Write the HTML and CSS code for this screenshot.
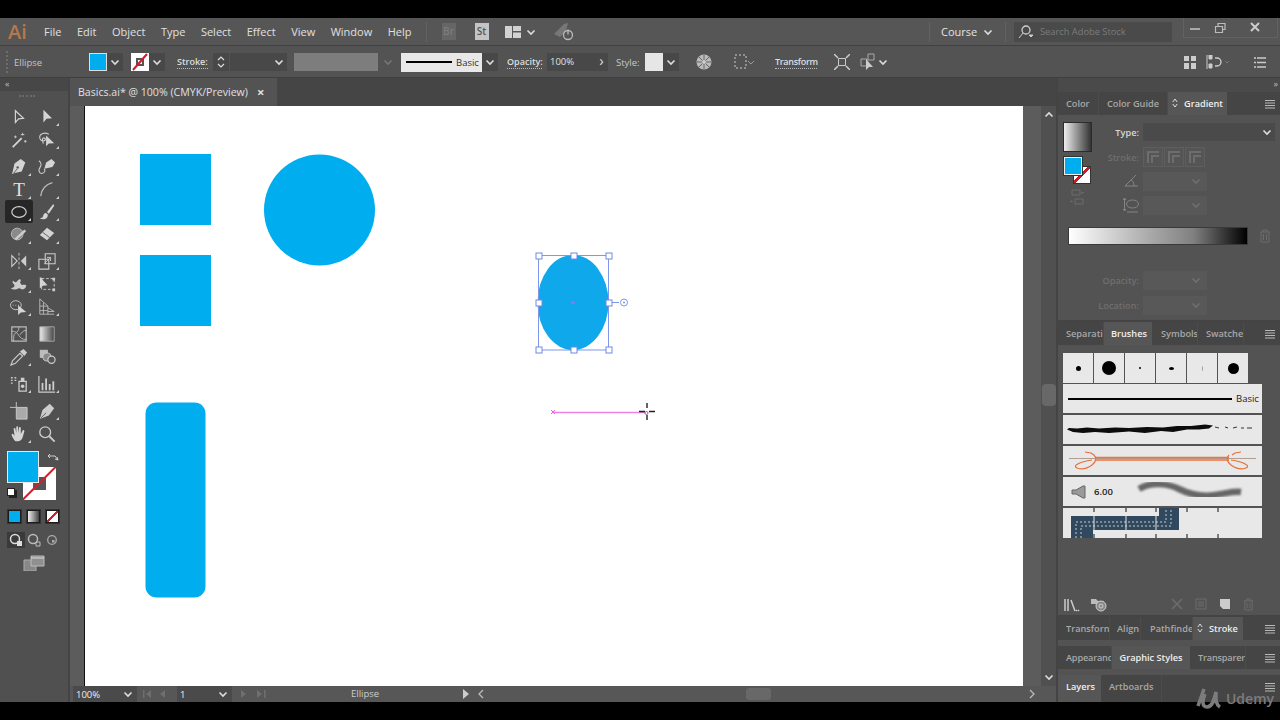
FILE: index.html
```html
<!DOCTYPE html>
<html>
<head>
    <title>Basics.ai - Illustrator</title>
    <link rel="stylesheet" href="styles.css">
</head>
<body>
    <svg class="sprite">
        <symbol id="chev" viewBox="0 0 10 10"><path d="M1.5 3.5 5 7l3.5-3.5" fill="none" stroke="currentColor" stroke-width="1.6"/></symbol>
        <symbol id="burger" viewBox="0 0 12 10"><path d="M1 1.5h10M1 4h10M1 6.500h10M1 9h10" stroke="currentColor" stroke-width="1.2"/></symbol>
        <symbol id="trash" viewBox="0 0 12 14"><path d="M1 3h10M4 3V1h4v2M2 3v10h8V3M4.500 5v6M7.500 5v6" fill="none" stroke="currentColor"/></symbol>
        <symbol id="updown" viewBox="0 0 6 10"><path d="M.8 4 3 1l2.200 3M.8 6 3 9l2.200-3" fill="none" stroke="currentColor" stroke-width=".9"/></symbol>
    </svg>

    <div class="app">
        <!-- Menu bar -->
        <div class="menubar">
            <span class="logo">Ai</span>
            <nav class="menu">
                <span>File</span><span>Edit</span><span>Object</span><span>Type</span><span>Select</span><span>Effect</span><span>View</span><span>Window</span><span>Help</span>
            </nav>
            <span class="vsep"></span>
            <span class="app-badge badge-br">Br</span>
            <span class="app-badge badge-st">St</span>
            <svg class="layout-ic" width="16" height="12" viewBox="0 0 16 12"><path d="M0 0h7v12H0zM8 0h8v5H8zM8 6.500h8V12H8z" fill="#d2d2d2"/></svg>
            <svg class="chev-small layout-chev"><use href="#chev"/></svg>
            <svg class="rocket" width="22" height="20" viewBox="0 0 22 20"><path d="M1 12 11 2l4-1-2 8-6 6z" fill="#777"/><circle cx="15" cy="13" r="4.500" fill="none" stroke="#bbb" stroke-width="1.300"/><path d="M15 7.500v5" stroke="#bbb" stroke-width="1.300"/></svg>
            <div class="menubar-right">
                <span class="vsep"></span>
                <span class="workspace">Course</span>
                <svg class="chev-small workspace-chev"><use href="#chev"/></svg>
                <span class="vsep"></span>
                <div class="stock-search">
                    <svg width="16" height="14" viewBox="0 0 16 14"><circle cx="8" cy="5" r="4" fill="none" stroke="#ccc" stroke-width="1.300"/><path d="M5 8 1 13M11 10h4l-2 2z" stroke="#ccc" fill="#ccc"/></svg>
                    <span>Search Adobe Stock</span>
                </div>
                <div class="win-btns">
                    <svg width="23" height="20" viewBox="0 0 23 20"><path d="M6 11h10" stroke="#aaa" stroke-width="2"/></svg>
                    <svg width="26" height="20" viewBox="0 0 26 20"><path d="M8.500 8.500h7v6h-7zM11 8V5.500h7v6h-2" fill="none" stroke="#bbb" stroke-width="1.200"/></svg>
                    <svg width="44" height="20" viewBox="0 0 44 20"><path d="m18 5 8 8M26 5l-8 8" stroke="#ccc" stroke-width="2"/></svg>
                </div>
            </div>
        </div>

        <!-- Control bar -->
        <div class="controlbar">
            <span class="gripper"></span>
            <span class="ctl-name">Ellipse</span>
            <span class="swatch swatch-fill"></span>
            <span class="ctl-chev"><svg class="chev-small"><use href="#chev"/></svg></span>
            <span class="swatch swatch-none">
                <svg width="18" height="18" viewBox="0 0 18 18"><path d="M6 6h6v6H6z" fill="none" stroke="#555" stroke-width="2"/><path d="M2 17 16 1" stroke="#c9202a" stroke-width="2"/></svg>
            </span>
            <span class="ctl-chev"><svg class="chev-small"><use href="#chev"/></svg></span>
            <span class="ctl-label ctl-stroke">Stroke:</span>
            <span class="stepper"><svg width="10" height="16" viewBox="0 0 10 16"><path d="M2 6l3-3 3 3M2 10l3 3 3-3" fill="none" stroke="#ddd" stroke-width="1.200"/></svg></span>
            <span class="ctl-input ctl-input-stroke"></span>
            <span class="ctl-chev"><svg class="chev-small"><use href="#chev"/></svg></span>
            <span class="dash-box"></span>
            <span class="ctl-chev ctl-chev-off"><svg class="chev-small"><use href="#chev"/></svg></span>
            <span class="brush-box"><span class="brush-line"></span><span>Basic</span></span>
            <span class="ctl-chev"><svg class="chev-small"><use href="#chev"/></svg></span>
            <span class="ctl-label ctl-opacity">Opacity:</span>
            <span class="ctl-input ctl-input-opacity">100%</span>
            <span class="ctl-arrow">&#8250;</span>
            <span class="ctl-plain ctl-style">Style:</span>
            <span class="swatch swatch-style"></span>
            <span class="ctl-chev"><svg class="chev-small"><use href="#chev"/></svg></span>
            <svg class="ctl-globe" width="16" height="16" viewBox="0 0 16 16"><circle cx="8" cy="8" r="7.500" fill="#bbb"/><path d="M8 1v14M1 8h14M3 3l10 10M13 3 3 13" stroke="#666"/><circle cx="8" cy="8" r="2" fill="#ccc"/></svg>
            <svg class="ctl-align" width="22" height="16" viewBox="0 0 22 16"><path d="M1 1h11v13H1z" fill="none" stroke="#ccc" stroke-dasharray="2 2"/><path d="m14 7 3 3 3-3" fill="none" stroke="#999"/></svg>
            <span class="ctl-label ctl-transform">Transform</span>
            <svg class="ctl-iso" width="16" height="16" viewBox="0 0 16 16"><path d="M4.500 4.500h7v7h-7z" fill="none" stroke="#ccc"/><path d="M0 0l4 4M16 0l-4 4M0 16l4-4M16 16l-4-4" stroke="#ccc" stroke-width="1.500"/></svg>
            <svg class="ctl-pick" width="18" height="18" viewBox="0 0 18 18"><path d="M1 6h6v7H1zM8 1h6v6H8z" fill="none" stroke="#aaa"/><path d="M6 6v11l3-3 4 0z" fill="#ccc"/></svg>
            <svg class="chev-small ctl-pick-chev"><use href="#chev"/></svg>
            <div class="ctl-right">
                <svg width="12" height="13" viewBox="0 0 12 13"><path d="M0 0h5v5H0zM7 0h5v5H7zM0 7h5v6H0zM7 7h5v6H7z" fill="#ccc"/></svg>
                <svg width="24" height="14" viewBox="0 0 24 14"><path d="M1 0v14M3 0h3v4H3zM3 9h3v4H3z" stroke="#ccc" fill="#ccc"/><path d="M9 3h2a4 4 0 0 1 0 8H9" fill="none" stroke="#ccc" stroke-width="1.400"/><path d="m19 6 2 2 2-2" fill="none" stroke="#777"/></svg>
                <svg class="ctl-list" width="12" height="11" viewBox="0 0 12 11"><path d="M0 1h2M3 1h9M0 5.500h2M3 5.500h9M0 10h2M3 10h9" stroke="#ccc" stroke-width="1.300"/></svg>
            </div>
        </div>

        <div class="workspace-area">
            <!-- Tools -->
            <aside class="toolbar">
                <div class="toolbar-top"><span class="collapse">&#171;</span></div>
                <span class="tool-grip"></span>
                <div class="tool-group">
                    <span class="tool"><svg viewBox="0 0 20 20"><path d="M6 3v13l3.500-4 5.500-.5z" fill="none" stroke="#d4d4d4" stroke-width="1.300"/></svg></span>
                    <span class="tool more"><svg viewBox="0 0 20 20"><path d="M6 2v14l3.500-4 6-.5z" fill="#d4d4d4"/></svg></span>
                    <span class="tool"><svg viewBox="0 0 20 20"><path d="M3 18 13 8" stroke="#d4d4d4" stroke-width="2"/><path d="M14 2v3M12 4h4M6 5v3M4.500 6.500h3M17 10v3M15.500 11.500h3" stroke="#ccc"/></svg></span>
                    <span class="tool more"><svg viewBox="0 0 20 20"><path d="M12 3.500C7 1 1 3 2 8c.7 3 4 4 6 2 1-1.500-1-3-2.500-2S5 11 6 14" fill="none" stroke="#ccc" stroke-width="1.200"/><path d="M9 5v12l3-3 6-.5z" fill="#d4d4d4"/></svg></span>
                </div>
                <div class="tool-group tool-group-tight">
                    <span class="tool more"><svg viewBox="0 0 20 20"><path d="M17 5 12 1 5 6 3 15l-1 3 2-1 9-2z" fill="#d4d4d4"/><circle cx="8.500" cy="10.500" r="1.300" fill="#555"/><path d="m4 17 4-5" stroke="#555"/></svg></span>
                    <span class="tool more"><svg viewBox="0 0 20 20"><path d="m19 5-4-4-6 4-2 7 9-2z" fill="#d4d4d4"/><path d="M1 3c3 2 3 5 1 8s0 7 3 6 3-3 2-5" fill="none" stroke="#ccc" stroke-width="1.200"/></svg></span>
                    <span class="tool more tool-t">T</span>
                    <span class="tool more"><svg viewBox="0 0 20 20"><path d="M3 18C4 10 9 5 16 3" fill="none" stroke="#bbb" stroke-width="1.500"/></svg></span>
                    <span class="tool more tool-active"><svg viewBox="0 0 20 20"><ellipse cx="10" cy="10" rx="8" ry="6" fill="none" stroke="#d4d4d4" stroke-width="1.300"/></svg></span>
                    <span class="tool more"><svg viewBox="0 0 20 20"><path d="M17 1 10 10l2 2 6-9z" fill="#d4d4d4"/><path d="M9 11c-3 0-3 3-4 5l-3 1c4 2 9 1 9-4z" fill="#d4d4d4"/></svg></span>
                    <span class="tool more"><svg viewBox="0 0 20 20"><circle cx="8" cy="10" r="6.500" fill="#8a8a8a" stroke="#bbb"/><path d="m7 17 11-10-2-2L5 15z" fill="#ccc"/></svg></span>
                    <span class="tool more"><svg viewBox="0 0 20 20"><path d="m2 11 8-8 8 6-8 8z" fill="#d4d4d4"/><path d="m5 8 8 6" stroke="#555"/></svg></span>
                </div>
                <div class="tool-group">
                    <span class="tool more"><svg viewBox="0 0 20 20"><path d="M2 4v12l6-6z" fill="none" stroke="#ccc" stroke-width="1.200"/><path d="M18 4v12l-6-6z" fill="#ccc"/><path d="M10 1v18" stroke="#ccc" stroke-dasharray="3 2"/></svg></span>
                    <span class="tool more"><svg viewBox="0 0 20 20"><path d="M1 8h11v11H1zM8 2h11v11H8z" fill="none" stroke="#ccc" stroke-width="1.200"/><path d="m7 13 7-7M10 6h4v4" fill="none" stroke="#ccc"/></svg></span>
                    <span class="tool more"><svg viewBox="0 0 20 20"><path d="M1 15c3 2 6 1 8 0s3 1 5 1 4-2 4-4-3-1-5-1l-2-3c2-1 1-4-1-3S8 8 6 8s-2-3-3-1 2 3 2 5-3 2-4 3z" fill="#ccc"/></svg></span>
                    <span class="tool"><svg viewBox="0 0 20 20"><path d="M4 4h14v12H4z" fill="none" stroke="#ccc" stroke-dasharray="3 2"/><path d="M2 2v13l3.500-3 5-.5z" fill="#d4d4d4"/><path d="M3 3h2v2H3zM16 3h3v3h-3zM16 15h3v3h-3z" fill="#ccc"/></svg></span>
                    <span class="tool more"><svg viewBox="0 0 20 20"><ellipse cx="6.500" cy="8" rx="6" ry="5" fill="none" stroke="#ccc"/><path d="M3 8h1M6 8h1M9 8h1" stroke="#ccc"/><path d="M9 8v11l3-3 6-.5z" fill="#d4d4d4"/></svg></span>
                    <span class="tool more"><svg viewBox="0 0 20 20"><path d="M2 1v17h16M2 1l9 8v9M6 5v13M2 9h9M2 14h9M11 11l7 4M11 15h7" fill="none" stroke="#bbb"/></svg></span>
                </div>
                <div class="tool-group">
                    <span class="tool"><svg viewBox="0 0 20 20"><path d="M2 2h16v16H2z" fill="none" stroke="#bbb" stroke-width="1.300"/><path d="M2 7c5 0 6 2 8 5s4 4 8 4M10 2c0 4-2 6-4 7s-2 5-2 9M18 6c-4 0-5 3-7 5" fill="none" stroke="#bbb"/></svg></span>
                    <span class="tool"><svg viewBox="0 0 20 20"><defs><linearGradient id="toolgrad"><stop offset="0" stop-color="#eee"/><stop offset="1" stop-color="#444"/></linearGradient></defs><path d="M2 2h16v16H2z" fill="url(#toolgrad)" stroke="#aaa"/></svg></span>
                    <span class="tool more"><svg viewBox="0 0 20 20"><path d="m1 19 2-5 8-8 3 3-8 8z" fill="none" stroke="#ccc" stroke-width="1.300"/><path d="m11 4 4-3 4 4-3 4z" fill="#ccc"/></svg></span>
                    <span class="tool"><svg viewBox="0 0 20 20"><path d="M2 2h9v9H2z" fill="#bbb"/><circle cx="10" cy="10" r="4.500" fill="#888" stroke="#ccc"/><circle cx="15" cy="13" r="4" fill="#555" stroke="#ccc" stroke-width="1.300"/></svg></span>
                </div>
                <div class="tool-group">
                    <span class="tool more"><svg viewBox="0 0 20 20"><path d="M1 3h2M5 3h2M1 6h2M5 6h2M1 9h2" stroke="#ccc" stroke-width="1.500"/><path d="M10 7h8v11h-8z" fill="none" stroke="#ccc" stroke-width="1.400"/><path d="M12 3h4v4h-4z" fill="#ccc"/><circle cx="14" cy="12.500" r="2" fill="#ccc"/></svg></span>
                    <span class="tool more"><svg viewBox="0 0 20 20"><path d="M1 1v18h18" fill="none" stroke="#ccc" stroke-width="1.300"/><path d="M5 17V9M9 17V4M13 17v-7M17 17V7" stroke="#ccc" stroke-width="2"/></svg></span>
                </div>
                <div class="tool-group">
                    <span class="tool"><svg viewBox="0 0 20 20"><path d="M7 6h12v13H7z" fill="#aaa" stroke="#ccc"/><path d="M0 6h7M7 0v6" stroke="#ccc"/></svg></span>
                    <span class="tool more"><svg viewBox="0 0 20 20"><path d="M2 19 5 9l8-7 5 5-6 8z" fill="#ccc"/><path d="m3 18 6-6" stroke="#555"/></svg></span>
                    <span class="tool more"><svg viewBox="0 0 20 20"><path d="M6 18c-2-2-5-7-4-8s3 2 3 2L4 4c0-1 2-1 2 0l1 5V2c0-1 2-1 2 0v7l1-6c0-1 2-1 2 0v7l2-4c1-1 2 0 2 1l-2 7c-1 3-3 4-5 4z" fill="#d4d4d4"/></svg></span>
                    <span class="tool"><svg viewBox="0 0 20 20"><circle cx="8" cy="8" r="6" fill="none" stroke="#ccc" stroke-width="1.500"/><path d="m12.500 12.500 6 6" stroke="#ccc" stroke-width="2"/></svg></span>
                </div>

                <!-- Fill and stroke -->
                <div class="fill-stroke">
                    <span class="fs-stroke"><span class="fs-hole"></span><span class="fs-slash"></span></span>
                    <span class="fs-fill"></span>
                    <svg class="fs-swap" width="12" height="12" viewBox="0 0 12 12"><path d="M1 4h7l3 4M1 4l2-2M1 4l2 2M11 8l-1-3M11 8 8 7" fill="none" stroke="#ccc"/></svg>
                    <span class="fs-default"></span>
                </div>
                <div class="mode-row">
                    <span class="mode mode-color"></span>
                    <span class="mode mode-grad"></span>
                    <span class="mode mode-none"></span>
                </div>
                <div class="draw-row">
                    <span class="draw draw-on"><svg width="14" height="14" viewBox="0 0 14 14"><circle cx="6" cy="6" r="4.500" fill="none" stroke="#ddd" stroke-width="1.500"/><path d="M8 8h5v5H8z" fill="#ddd"/></svg></span>
                    <span class="draw"><svg width="14" height="14" viewBox="0 0 14 14"><circle cx="6" cy="6" r="4.500" fill="none" stroke="#bbb" stroke-width="1.500"/><path d="M9 9h4v4H9z" fill="none" stroke="#bbb"/></svg></span>
                    <span class="draw"><svg width="12" height="12" viewBox="0 0 14 14"><circle cx="7" cy="7" r="5" fill="none" stroke="#aaa" stroke-width="1.500"/><path d="M7 7h3v3H7z" fill="#aaa"/></svg></span>
                </div>
                <div class="screen-mode">
                    <svg width="22" height="16" viewBox="0 0 22 16"><path d="M1 5h12v11H1z" fill="#888" stroke="#aaa"/><path d="M8 1h13v10H8z" fill="#8f8f8f" stroke="#bbb"/><path d="M8 3h13" stroke="#ddd"/></svg>
                </div>
            </aside>

            <!-- Document -->
            <main class="document">
                <div class="tabbar">
                    <div class="doc-tab">
                        <span>Basics.ai* @ 100% (CMYK/Preview)</span>
                        <span class="tab-close">&#215;</span>
                    </div>
                </div>
                <div class="doc-body">
                    <div class="pasteboard">
                        <div class="artboard">
                            <svg class="drawing" width="938" height="580" viewBox="85 106 938 580">
                                <rect x="140" y="154" width="71" height="71" fill="#00aeef"/>
                                <rect x="140" y="255" width="71" height="71" fill="#00aeef"/>
                                <circle cx="319.500" cy="210" r="55.500" fill="#00aeef"/>
                                <rect x="145.500" y="402.500" width="60" height="195" rx="11" fill="#00aeef"/>
                                <ellipse cx="573" cy="302.500" rx="35.500" ry="47.500" fill="#0fa8ea"/>
                                <g fill="none" stroke="#7d97ea">
                                    <rect x="538.500" y="255.500" width="70" height="94.500"/>
                                    <path d="M609 302.500h10"/>
                                    <circle cx="624" cy="302.500" r="3.500"/>
                                </g>
                                <circle cx="624" cy="302.500" r="1" fill="#7d97ea"/>
                                <g fill="#fff" stroke="#6f8ae6">
                                    <rect x="536" y="253" width="6" height="6"/>
                                    <rect x="571" y="253" width="6" height="6"/>
                                    <rect x="606" y="253" width="6" height="6"/>
                                    <rect x="536" y="300" width="6" height="6"/>
                                    <rect x="606" y="300" width="6" height="6"/>
                                    <rect x="536" y="347" width="6" height="6"/>
                                    <rect x="571" y="347" width="6" height="6"/>
                                    <rect x="606" y="347" width="6" height="6"/>
                                </g>
                                <circle cx="573" cy="302.500" r="1.800" fill="#8f78ea"/>
                                <path d="M553 412.500h92" stroke="#ee82e6" stroke-width="1.400"/>
                                <path d="m551 410 4 4m0-4-4 4" stroke="#ee60e0"/>
                                <path d="M647 403v5M647 415v5M639 411.500h6M649 411.500h6" stroke="#222" stroke-width="1.400"/>
                                <circle cx="646.500" cy="413" r="1.500" fill="none" stroke="#a55ca0"/>
                            </svg>
                        </div>
                    </div>
                    <div class="v-scroll">
                        <svg class="chev-small chev-up"><use href="#chev"/></svg>
                        <span class="v-thumb"></span>
                        <svg class="chev-small"><use href="#chev"/></svg>
                    </div>
                </div>
                <div class="statusbar">
                    <span class="st-input st-zoom">100%</span>
                    <span class="st-chev"><svg class="chev-small"><use href="#chev"/></svg></span>
                    <span class="st-nav st-nav-left">
                        <svg width="34" height="10" viewBox="0 0 34 10"><path d="M1 1v8h1.500V1zM9 1 4 5l5 4zM23 1l-5 4 5 4z" fill="#6f6f6f"/></svg>
                    </span>
                    <span class="st-input st-page">1</span>
                    <span class="st-chev"><svg class="chev-small"><use href="#chev"/></svg></span>
                    <span class="st-nav st-nav-right">
                        <svg width="34" height="10" viewBox="0 0 34 10"><path d="m1 1 5 4-5 4zM17 1l5 4-5 4zM24 1v8h1.500V1z" fill="#6f6f6f"/></svg>
                    </span>
                    <span class="st-tool">Ellipse</span>
                    <svg class="st-play" width="8" height="10" viewBox="0 0 8 10"><path d="m1 0 6 5-6 5z" fill="#ccc"/></svg>
                    <svg class="st-back" width="8" height="10" viewBox="0 0 8 10"><path d="M6 1 2 5l4 4" fill="none" stroke="#bbb" stroke-width="1.300"/></svg>
                    <span class="h-thumb"></span>
                    <svg class="st-end" width="8" height="10" viewBox="0 0 8 10"><path d="m2 1 4 4-4 4" fill="none" stroke="#bbb" stroke-width="1.300"/></svg>
                </div>
            </main>

            <!-- Panels -->
            <aside class="panels">
                <div class="panels-top"><span class="collapse">&#187;</span></div>

                <div class="tabs">
                    <span class="tab tab-color">Color</span>
                    <span class="tab tab-guide">Color Guide</span>
                    <span class="tab tab-gradient tab-on"><svg class="tab-arrow"><use href="#updown"/></svg>Gradient</span>
                    <svg class="burger"><use href="#burger"/></svg>
                </div>
                <section class="gradient-panel">
                    <div class="grad-top">
                        <div class="grad-left">
                            <span class="grad-preview"></span>
                            <div class="mini-fs"><span class="mini-stroke"></span><span class="mini-fill"></span></div>
                            <svg class="mini-ic" width="16" height="16" viewBox="0 0 16 16"><path d="M3 1h8v5H3zM6 10h8v5H6z" fill="none" stroke="#6d6d6d"/><path d="M12 3h3l-1.500 2zM1 13h3l-1.500-2z" fill="#6d6d6d"/></svg>
                        </div>
                        <div class="grad-fields">
                            <div class="grad-row grad-row-type">
                                <span class="grad-label grad-label-on">Type:</span>
                                <span class="grad-select"><svg class="chev-small"><use href="#chev"/></svg></span>
                            </div>
                            <div class="grad-row grad-row-stroke">
                                <span class="grad-label">Stroke:</span>
                                <span class="grad-buttons">
                                    <span class="grad-btn"><svg width="14" height="14" viewBox="0 0 14 14"><path d="M2 13V2h11M6 13V6h7" fill="none" stroke="#6d6d6d" stroke-width="2"/></svg></span>
                                    <span class="grad-btn"><svg width="14" height="14" viewBox="0 0 14 14"><path d="M2 13V2h11M6 13V6h7" fill="none" stroke="#6d6d6d" stroke-width="2"/></svg></span>
                                    <span class="grad-btn"><svg width="14" height="14" viewBox="0 0 14 14"><path d="M2 13V2h11M6 13V6h7" fill="none" stroke="#6d6d6d" stroke-width="2"/></svg></span>
                                </span>
                            </div>
                            <div class="grad-row">
                                <svg class="grad-label-ic" width="16" height="14" viewBox="0 0 16 14"><path d="M13 1 2 12h13M8 6c2 1 3 3 3 6" fill="none" stroke="#858585"/></svg>
                                <span class="grad-field"><svg class="chev-small"><use href="#chev"/></svg></span>
                            </div>
                            <div class="grad-row">
                                <svg class="grad-label-ic" width="16" height="16" viewBox="0 0 16 16"><ellipse cx="9.500" cy="7" rx="6" ry="4" fill="none" stroke="#858585"/><path d="M1.500 1v13M0 3l1.500-2L3 3M0 12l1.500 2L3 12M4 15h11" fill="none" stroke="#858585"/></svg>
                                <span class="grad-field"><svg class="chev-small"><use href="#chev"/></svg></span>
                            </div>
                        </div>
                    </div>
                    <div class="grad-bar-row">
                        <span class="grad-bar"></span>
                        <svg class="grad-trash"><use href="#trash"/></svg>
                    </div>
                    <div class="grad-row grad-row-low">
                        <span class="grad-label">Opacity:</span>
                        <span class="grad-field"><svg class="chev-small"><use href="#chev"/></svg></span>
                    </div>
                    <div class="grad-row">
                        <span class="grad-label">Location:</span>
                        <span class="grad-field"><svg class="chev-small"><use href="#chev"/></svg></span>
                    </div>
                </section>

                <div class="tabs tabs-brushes">
                    <span class="tab tab-sep">Separati</span>
                    <span class="tab tab-brush tab-on">Brushes</span>
                    <span class="tab tab-sym">Symbols</span>
                    <span class="tab tab-swatch">Swatche</span>
                    <svg class="burger"><use href="#burger"/></svg>
                </div>
                <section class="brushes-panel">
                    <div class="tips">
                        <span class="tip"><i class="dot dot-5"></i></span>
                        <span class="tip"><i class="dot dot-14"></i></span>
                        <span class="tip"><i class="dot dot-2"></i></span>
                        <span class="tip"><i class="dot dot-oval"></i></span>
                        <span class="tip"><i class="dot dot-thin"></i></span>
                        <span class="tip"><i class="dot dot-11"></i></span>
                    </div>
                    <div class="brush-row brush-basic"><span class="basic-line"></span><span>Basic</span></div>
                    <div class="brush-row">
                        <svg width="199" height="29" viewBox="0 0 199 29"><path d="M6 13l8 .5 10-1 12 1 16-1 14 .5 18-1 16 .5 14-1.500 14 0 14-1.500 8 1-4 3-10 1-12 0-14 2.500-12-1-16 2-16-1.500-20 1.500-14-1-12 1-10-1-6-2.500z" fill="#0c0c0c"/><path d="M152 12l4 1M162 12l3 1M170 13l4-1M178 13h3M184 13h5" stroke="#333"/></svg>
                    </div>
                    <div class="brush-row">
                        <svg width="199" height="29" viewBox="0 0 199 29"><path d="M6 12.500h187" stroke="#a08a7c" stroke-width=".8"/><path d="M32 11.500h134M32 14h134" stroke="#ec7540" stroke-width="1.300"/><path d="M31 9c3 3 2 7-2 10s-10 5-15 3 2-6 15-8M22 6l6 1 3 2M166 9c-3 3-2 7 2 10s10 5 15 3-2-6-15-8M178 6l-6 1-3 2" fill="none" stroke="#e8703c" stroke-width="1.200"/></svg>
                    </div>
                    <div class="brush-row brush-bristle">
                        <svg width="16" height="14" viewBox="0 0 16 14"><path d="M1 5h4l7-4h2v12h-2L5 9H1z" fill="#9a9a9a" stroke="#666"/></svg>
                        <span class="bristle-size">6.00</span>
                        <svg class="bristle" width="110" height="26" viewBox="0 0 110 26"><defs><filter id="soft"><feGaussianBlur stdDeviation="1.200"/></filter></defs><path d="M4 10c12-7 28-6 40 0s22 8 36 6 18-4 26-3" fill="none" stroke="#666" stroke-width="6.500" filter="url(#soft)"/></svg>
                    </div>
                    <div class="brush-row brush-pattern">
                        <svg width="199" height="30" viewBox="0 0 199 30">
                            <path d="M8 30V8h88V0h20v22H30v8z" fill="#30495f"/>
                            <path d="M13 30V14h90V0M18 30V18h90V0" fill="none" stroke="#c6ccd0" stroke-dasharray="2 2"/>
                            <path d="M31 0v4M63 0v4M93 0v4M124 0v4M155 0v4M31 26v4M63 26v4M93 26v4M124 26v4M155 26v4" stroke="#111"/>
                            <path d="M31 8v18M63 8v18M93 8v18" stroke="#e4e4e4"/>
                        </svg>
                    </div>
                    <div class="brush-footer">
                        <svg width="18" height="14" viewBox="0 0 18 14"><path d="M1 1v12M4 1v12M7 2l4 11M12 12l1 1M14 12l1 1" stroke="#ccc" stroke-width="1.500"/></svg>
                        <svg width="18" height="14" viewBox="0 0 18 14"><path d="M1 1h5l2 2h6v3H1z" fill="#bbb"/><circle cx="11" cy="8" r="5" fill="#888" stroke="#ccc"/><circle cx="11" cy="8" r="2" fill="none" stroke="#ccc"/></svg>
                        <span class="footer-right">
                            <svg width="12" height="12" viewBox="0 0 12 12"><path d="m1 1 10 10M11 1 1 11" stroke="#6d6d6d" stroke-width="1.500"/></svg>
                            <svg width="12" height="12" viewBox="0 0 12 12"><path d="M1 1h10v10H1zM3 4h6M3 6h6M3 8h6" fill="none" stroke="#6d6d6d"/></svg>
                            <svg width="12" height="12" viewBox="0 0 12 12"><path d="M1 1h10v10H4L1 8z" fill="#ccc"/></svg>
                            <svg class="footer-trash"><use href="#trash"/></svg>
                        </span>
                    </div>
                </section>

                <div class="tabs tabs-stroke">
                    <span class="tab tab-trans">Transforn</span>
                    <span class="tab tab-align">Align</span>
                    <span class="tab tab-path">Pathfinde</span>
                    <span class="tab tab-stroke tab-on"><svg class="tab-arrow"><use href="#updown"/></svg>Stroke</span>
                    <svg class="burger"><use href="#burger"/></svg>
                </div>
                <div class="tabs tabs-styles">
                    <span class="tab tab-appear">Appearanc</span>
                    <span class="tab tab-styles tab-on">Graphic Styles</span>
                    <span class="tab tab-transp">Transparer</span>
                    <svg class="burger"><use href="#burger"/></svg>
                </div>
                <div class="tabs tabs-layers">
                    <span class="tab tab-layers tab-on">Layers</span>
                    <span class="tab tab-boards">Artboards</span>
                    <svg class="burger"><use href="#burger"/></svg>
                </div>

                <div class="watermark">
                    <svg width="28" height="24" viewBox="0 0 28 24"><path d="M3 20 9 3M10 8c-3 7-3 13 2 13s7-6 9-15c0 6-1 12 4 15" fill="none" stroke="currentColor" stroke-width="3.500"/></svg>
                    <span>Udemy</span>
                </div>
            </aside>
        </div>
    </div>
</body>
</html>
```

FILE: styles.css
```css
* {
    box-sizing: border-box;
}
html, body {
    height: 720px;
}
body {
    margin: 0;
    background: #000;
    font-family: 'Open Sans', sans-serif;
    font-size: 10px;
    color: #ddd;
}
.sprite {
    display: none;
}
svg {
    display: block;
    flex: none;
}
.chev-small {
    width: 10px;
    height: 10px;
    color: #ddd;
}
.app {
    position: relative;
    top: 18px;
    height: 684px;
    width: 1280px;
    display: flex;
    flex-direction: column;
    background: #535353;
}

/* Menu bar */
.menubar {
    height: 28px;
    background: #565656;
    border-bottom: 1px solid #414141;
    display: flex;
    align-items: center;
    flex: none;
}
.logo {
    margin-left: 8px;
    width: 36px;
    font-size: 20px;
    line-height: 20px;
    color: #b5784c;
    font-weight: 600;
}
.menu {
    display: flex;
    gap: 15.500px;
    font-size: 11px;
    color: #e0e0e0;
}
.vsep {
    width: 1px;
    height: 20px;
    background: #626262;
}
.menubar > .vsep {
    margin-left: 14px;
}
.app-badge {
    width: 14px;
    height: 17px;
    font-size: 10px;
    line-height: 17px;
    text-align: center;
    font-weight: 600;
}
.badge-br {
    margin-left: 15px;
    background: #666;
    color: #7d7d7d;
}
.badge-st {
    margin-left: 19px;
    background: #c4c4c4;
    color: #555;
}
.layout-ic {
    margin-left: 16px;
}
.layout-chev {
    margin-left: 5px;
}
.rocket {
    margin-left: 17px;
}
.menubar-right {
    margin-left: auto;
    display: flex;
    align-items: center;
}
.workspace {
    margin-left: 11px;
    width: 34px;
    font-size: 11px;
    white-space: nowrap;
    color: #e4e4e4;
}
.workspace-chev {
    margin-left: 8px;
    margin-right: 12px;
}
.stock-search {
    margin-left: 8px;
    width: 158px;
    height: 20px;
    background: #4a4a4a;
    display: flex;
    align-items: center;
    gap: 6px;
    padding-left: 4px;
    color: #7c7c7c;
    font-size: 9.300px;
}
.win-btns {
    margin-left: 11px;
    margin-right: 2px;
    display: flex;
    align-items: center;
    border: 1px solid #626262;
    border-top: none;
    height: 20px;
    margin-top: -8px;
    padding-top: 1px;
}

/* Control bar */
.controlbar {
    height: 32px;
    padding-top: 1px;
    background: #535353;
    border-bottom: 1px solid #3f3f3f;
    display: flex;
    align-items: center;
    flex: none;
}
.gripper {
    width: 2px;
    height: 22px;
    margin-left: 6px;
    border-left: 2px dotted #6d6d6d;
}
.ctl-name {
    margin-left: 6px;
    width: 75px;
    color: #c4c4c4;
    font-size: 9.500px;
}
.swatch {
    display: block;
    height: 18px;
    flex: none;
}
.swatch-fill {
    width: 18px;
    background: #00aeef;
    border: 1px solid #ddd;
}
.swatch-none {
    width: 18px;
    margin-left: 8px;
    background: #fff;
}
.swatch-style {
    width: 18px;
    margin-left: 5px;
    background: #e6e6e6;
}
.ctl-chev {
    width: 16px;
    height: 18px;
    background: #484848;
    display: flex;
    align-items: center;
    justify-content: center;
    flex: none;
}
.ctl-chev-off {
    background: none;
    margin-left: 2px;
    opacity: 0.25;
}
.ctl-label {
    color: #dedede;
    font-size: 9px;
    font-weight: 600;
    border-bottom: 1px dotted #bbb;
    line-height: 12px;
    white-space: nowrap;
}
.ctl-stroke {
    margin-left: 12px;
    width: 31px;
}
.stepper {
    margin-left: 5px;
    width: 16px;
    height: 18px;
    background: #484848;
    display: flex;
    align-items: center;
    justify-content: center;
}
.ctl-input {
    height: 18px;
    background: #484848;
    color: #e0e0e0;
    line-height: 18px;
    font-size: 9.500px;
    flex: none;
}
.ctl-input-stroke {
    margin-left: 1px;
    width: 41px;
}
.dash-box {
    margin-left: 7px;
    width: 84px;
    height: 18px;
    background: #7d7d7d;
}
.brush-box {
    margin-left: 5px;
    width: 81px;
    height: 19px;
    background: #e8e8e8;
    color: #333;
    font-size: 9.500px;
    display: flex;
    align-items: center;
    gap: 4px;
    padding-left: 5px;
}
.brush-line {
    width: 46px;
    height: 2px;
    background: #000;
}
.ctl-opacity {
    margin-left: 9px;
    width: 35px;
}
.ctl-input-opacity {
    margin-left: 5px;
    width: 48px;
    padding-left: 3px;
}
.ctl-arrow {
    width: 13px;
    height: 18px;
    background: #484848;
    font-size: 15px;
    line-height: 15px;
    text-align: center;
}
.ctl-plain {
    color: #c8c8c8;
    font-size: 9.500px;
}
.ctl-style {
    margin-left: 8px;
    width: 24px;
}
.ctl-globe {
    margin-left: 17px;
}
.ctl-align {
    margin-left: 22px;
}
.ctl-transform {
    margin-left: 19px;
    width: 42px;
    letter-spacing: -0.3px;
}
.ctl-iso {
    margin-left: 17px;
}
.ctl-pick {
    margin-left: 10px;
}
.ctl-pick-chev {
    margin-left: 0;
}
.ctl-right {
    margin-left: auto;
    margin-right: 14px;
    display: flex;
    align-items: center;
    gap: 10px;
}
.ctl-list {
    margin-left: 14px;
}

/* Layout below the bars */
.workspace-area {
    flex: 1;
    min-height: 0;
    display: flex;
}

/* Tools */
.toolbar {
    width: 70px;
    flex: none;
    background: #505050;
    border-right: 2px solid #444;
    display: flex;
    flex-direction: column;
}
.toolbar-top {
    height: 13px;
    background: #474747;
    padding-left: 5px;
}
.collapse {
    display: block;
    font-size: 9px;
    line-height: 11px;
    color: #bbb;
}
.tool-grip {
    height: 3px;
    width: 16px;
    margin: 4px 0 4px 19px;
    border-top: 2px dotted #6a6a6a;
}
.tool-group {
    display: grid;
    grid-template-columns: 28px 28px;
    grid-auto-rows: 23px;
    padding-left: 5px;
    margin-top: 3px;
    margin-bottom: 1px;
}
.tool-group-tight {
    grid-auto-rows: 22.500px;
}
.tool {
    position: relative;
    width: 28px;
    height: 23px;
    display: flex;
    align-items: center;
    justify-content: center;
}
.tool svg {
    width: 18px;
    height: 18px;
}
.tool-active {
    background: #262626;
    border-radius: 2px;
}
.tool-t {
    font-family: 'Liberation Serif', serif;
    font-size: 19px;
    line-height: 23px;
    color: #e0e0e0;
}
.more::after {
    content: "";
    position: absolute;
    right: 2px;
    bottom: 2px;
    border-left: 3px solid transparent;
    border-bottom: 3px solid #ccc;
}
.fill-stroke {
    position: relative;
    height: 50px;
    margin-top: 5px;
}
.fs-fill {
    position: absolute;
    left: 7px;
    top: 0;
    width: 32px;
    height: 32px;
    background: #00aeef;
    border: 1px solid #e8e8e8;
}
.fs-stroke {
    position: absolute;
    left: 23px;
    top: 16px;
    width: 33px;
    height: 33px;
    background: #fff;
    overflow: hidden;
}
.fs-hole {
    position: absolute;
    left: 10px;
    top: 10px;
    width: 13px;
    height: 13px;
    background: #555;
}
.fs-slash {
    position: absolute;
    left: -7px;
    top: 15px;
    width: 47px;
    height: 2px;
    background: #d2202c;
    transform: rotate(-45deg);
}
.fs-swap {
    position: absolute;
    left: 47px;
    top: 1px;
}
.fs-default {
    position: absolute;
    left: 7px;
    top: 37px;
    width: 8px;
    height: 8px;
    background: #fff;
    border: 1px solid #222;
    box-shadow: 2px 2px 0 #222;
}
.mode-row {
    display: flex;
    gap: 6px;
    margin: 9px 0 0 8px;
}
.mode {
    width: 13px;
    height: 13px;
    border: 1px solid #1c1c1c;
    outline: 1px solid #333;
}
.mode-color {
    background: #00aeef;
}
.mode-grad {
    background: linear-gradient(90deg, #eee, #444);
}
.mode-none {
    background: linear-gradient(135deg, #fff 42%, #d2202c 42%, #d2202c 58%, #fff 58%);
}
.draw-row {
    display: flex;
    margin: 9px 0 0 7px;
    height: 16px;
}
.draw {
    width: 18px;
    height: 16px;
    display: flex;
    align-items: center;
    justify-content: center;
}
.draw-on {
    background: #3a3a3a;
}
.screen-mode {
    margin: 7px 0 0 23px;
}

/* Document */
.document {
    width: 986px;
    flex: none;
    display: flex;
    flex-direction: column;
}
.tabbar {
    height: 28px;
    background: #454545;
    flex: none;
}
.doc-tab {
    width: 207px;
    height: 28px;
    background: #535353;
    display: flex;
    align-items: center;
    gap: 9px;
    padding-left: 8px;
    font-size: 10.600px;
    color: #e0e0e0;
}
.tab-close {
    font-size: 13px;
    font-weight: 700;
    line-height: 13px;
}
.doc-body {
    flex: 1;
    min-height: 0;
    display: flex;
}
.pasteboard {
    flex: 1;
    background: #5c5c5c;
    padding: 0 18px 0 14px;
}
.artboard {
    height: 100%;
    background: #fff;
    border-left: 1px solid #111;
    overflow: hidden;
}
.v-scroll {
    width: 16px;
    flex: none;
    background: #505050;
    display: flex;
    flex-direction: column;
    align-items: center;
    padding: 4px 0;
}
.chev-up {
    transform: rotate(180deg);
    margin-bottom: 264px;
}
.v-thumb {
    width: 14px;
    height: 22px;
    border-radius: 4px;
    background: #686868;
    margin-bottom: 266px;
}
.statusbar {
    height: 16px;
    background: #575757;
    display: flex;
    align-items: center;
    flex: none;
    font-size: 9.500px;
}
.st-input {
    height: 16px;
    background: #4a4a4a;
    line-height: 18px;
    padding-left: 3px;
    color: #eee;
}
.st-zoom {
    margin-left: 3px;
    width: 46px;
}
.st-page {
    width: 37px;
}
.st-chev {
    width: 18px;
    height: 16px;
    background: #4a4a4a;
    display: flex;
    align-items: center;
    justify-content: center;
}
.st-nav-left {
    margin-left: 5px;
    width: 35px;
}
.st-nav-right {
    margin-left: 8px;
    width: 34px;
}
.st-tool {
    margin-left: 77px;
    width: 111px;
    line-height: 18px;
    color: #ccc;
}
.st-play {
    margin-left: 0;
}
.st-back {
    margin-left: 7px;
}
.h-thumb {
    width: 25px;
    height: 12px;
    margin-left: 261px;
    border-radius: 3px;
    background: #686868;
}
.st-end {
    margin-left: auto;
    margin-right: 20px;
}

/* Panels */
.panels {
    position: relative;
    width: 224px;
    flex: none;
    background: #535353;
    border-left: 2px solid #444;
    display: flex;
    flex-direction: column;
}
.panels-top {
    height: 14px;
    background: #4a4a4a;
    display: flex;
    justify-content: flex-end;
    padding-right: 2px;
}
.tabs {
    height: 23px;
    background: #454545;
    display: flex;
    position: relative;
    flex: none;
}
.tab {
    height: 100%;
    padding-left: 8px;
    font-size: 9.200px;
    font-weight: 600;
    line-height: 23px;
    color: #a8a8a8;
    border-right: 1px solid #4c4c4c;
    white-space: nowrap;
    overflow: hidden;
}
.tab-on {
    background: #565656;
    color: #eee;
    border-right: none;
}
.tab-arrow {
    display: inline-block;
    width: 6px;
    height: 10px;
    margin-right: 6px;
    vertical-align: -1px;
}
.burger {
    position: absolute;
    right: 4px;
    top: 7px;
    width: 12px;
    height: 10px;
    color: #b8b8b8;
}
.tab-color { width: 41px; }
.tab-guide { width: 69px; }
.tab-gradient { width: 59px; padding-left: 4px; }
.tab-sep { width: 46px; }
.tab-brush { width: 48px; padding-left: 7px; }
.tab-sym { width: 46px; padding-left: 9px; }
.tab-swatch { width: 46px; }
.tab-trans { width: 52px; }
.tab-align { width: 31px; padding-left: 7px; }
.tab-path { width: 52px; padding-left: 9px; }
.tab-stroke { width: 50px; padding-left: 4px; }
.tab-appear { width: 54px; letter-spacing: -0.2px; }
.tab-styles { width: 78px; text-align: center; padding-left: 0; }
.tab-transp { width: 56px; letter-spacing: -0.2px; }
.tab-layers { width: 43px; }
.tab-boards { width: 61px; }

.gradient-panel {
    height: 207px;
    flex: none;
    padding: 7px 0 0 5px;
    border-bottom: 2px solid #444;
}
.grad-top {
    display: flex;
}
.grad-left {
    width: 42px;
    flex: none;
}
.grad-preview {
    display: block;
    width: 29px;
    height: 30px;
    background: linear-gradient(90deg, #eee, #333);
    border: 1px solid #2c2c2c;
}
.mini-fs {
    position: relative;
    height: 28px;
    margin-top: 5px;
}
.mini-fill {
    position: absolute;
    left: 1px;
    top: 0;
    width: 18px;
    height: 18px;
    background: #00aeef;
    border: 1px solid #eee;
    outline: 1px solid #333;
}
.mini-stroke {
    position: absolute;
    left: 10px;
    top: 9px;
    width: 18px;
    height: 18px;
    background: linear-gradient(135deg, #fff 42%, #c81e28 42%, #c81e28 56%, #fff 56%);
    border: 1px solid #333;
}
.mini-ic {
    margin: 4px 0 0 6px;
}
.grad-fields {
    flex: 1;
}
.grad-row {
    display: flex;
    align-items: center;
    gap: 4px;
    height: 24px;
}
.grad-row-type {
    height: 20px;
}
.grad-row-stroke {
    margin-top: 3px;
}
.grad-label {
    width: 34px;
    display: flex;
    justify-content: flex-end;
    color: #6f6f6f;
    font-weight: 600;
    font-size: 9.200px;
    white-space: nowrap;
}
.grad-label-on {
    color: #d8d8d8;
}
.grad-label-ic {
    margin-left: 18px;
}
.grad-select {
    width: 132px;
    height: 18px;
    background: #4a4a4a;
    display: flex;
    align-items: center;
    justify-content: flex-end;
    padding-right: 3px;
}
.grad-buttons {
    display: flex;
    gap: 1px;
}
.grad-btn {
    width: 20px;
    height: 20px;
    background: #555;
    border: 1px solid #5e5e5e;
    display: flex;
    align-items: center;
    justify-content: center;
}
.grad-field {
    width: 64px;
    height: 19px;
    background: #585858;
    display: flex;
    align-items: center;
    justify-content: flex-end;
    padding-right: 6px;
}
.grad-field .chev-small {
    color: #6f6f6f;
}
.grad-bar-row {
    display: flex;
    align-items: center;
    margin: 10px 0 0 5px;
}
.grad-bar {
    width: 180px;
    height: 18px;
    background: linear-gradient(90deg, #fff, #aaa 45%, #808080 70%, #000);
    border: 1px solid #3a3a3a;
}
.grad-trash {
    width: 12px;
    height: 14px;
    margin-left: 11px;
    color: #6d6d6d;
}
.grad-row-low {
    margin-top: 23px;
}
.gradient-panel > .grad-row {
    padding-left: 42px;
    margin-bottom: 1px;
}

.brushes-panel {
    height: 272px;
    flex: none;
    padding: 8px 0 0 5px;
    border-bottom: 2px solid #444;
    display: flex;
    flex-direction: column;
}
.tips {
    display: flex;
    gap: 1px;
    height: 31px;
}
.tip {
    width: 30px;
    height: 30px;
    background: #e8e8e8;
    display: flex;
    align-items: center;
    justify-content: center;
}
.dot {
    display: block;
    background: #000;
    border-radius: 50%;
}
.dot-5 { width: 5px; height: 5px; }
.dot-14 { width: 14px; height: 14px; }
.dot-2 { width: 2px; height: 2px; }
.dot-oval { width: 5px; height: 3px; }
.dot-thin { width: 1px; height: 5px; background: #999; }
.dot-11 { width: 11px; height: 11px; }
.brush-row {
    width: 199px;
    height: 29px;
    margin-bottom: 2px;
    background: #e8e8e8;
    color: #222;
    font-size: 9.500px;
    flex: none;
    overflow: hidden;
}
.brush-basic {
    display: flex;
    align-items: center;
    gap: 4px;
    padding-left: 5px;
}
.basic-line {
    width: 164px;
    height: 2px;
    background: #000;
}
.brush-bristle {
    display: flex;
    align-items: center;
    padding-left: 8px;
}
.bristle-size {
    margin-left: 7px;
    width: 32px;
    font-weight: 600;
}
.bristle {
    margin-left: 9px;
}
.brush-pattern {
    height: 30px;
}
.brush-footer {
    margin-top: auto;
    height: 17px;
    display: flex;
    align-items: flex-start;
    gap: 8px;
    padding-left: 1px;
    width: 191px;
}
.footer-right {
    margin-left: auto;
    display: flex;
    gap: 12px;
}
.footer-trash {
    width: 11px;
    height: 13px;
    color: #6d6d6d;
}
.tabs-stroke, .tabs-styles {
    margin-bottom: 6px;
    height: 23px;
}
.tabs-layers {
    flex: 1;
    height: auto;
}
.tabs-layers .tab {
    line-height: 24px;
}
.watermark {
    position: absolute;
    right: 6px;
    bottom: -8px;
    display: flex;
    align-items: center;
    gap: 3px;
    color: #7c7c7c;
    font-size: 14px;
    font-weight: 600;
}
```
